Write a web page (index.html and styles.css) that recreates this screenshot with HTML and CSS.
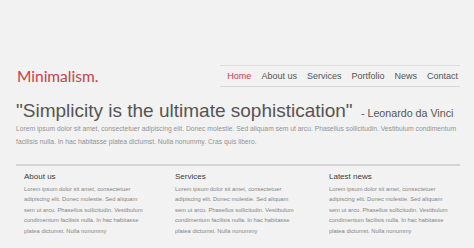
FILE: index.html
```html
<!DOCTYPE html>
<html>
<head>
<meta charset="utf-8">
<link rel="stylesheet" href="styles.css">
</head>
<body>
<div class="page">
  <header class="header">
    <div class="logo">Minimalism.</div>
    <nav class="nav">
      <a class="nav-link active">Home</a>
      <a class="nav-link">About us</a>
      <a class="nav-link">Services</a>
      <a class="nav-link">Portfolio</a>
      <a class="nav-link">News</a>
      <a class="nav-link">Contact</a>
    </nav>
  </header>
  <section class="intro">
    <h1 class="quote">"Simplicity is the ultimate sophistication" <span class="author">- Leonardo da Vinci</span></h1>
    <p class="intro-text">Lorem ipsum dolor sit amet, consectetuer adipiscing elit. Donec molestie. Sed aliquam sem ut arcu. Phasellus sollicitudin. Vestibulum condimentum facilisis nulla. In hac habitasse platea dictumst. Nulla nonummy. Cras quis libero.</p>
  </section>
  <section class="columns">
    <div class="col">
      <h2 class="col-title">About us</h2>
      <p class="col-text">Lorem ipsum dolor sit amet, consectetuer<br>adipiscing elit. Donec molestie. Sed aliquam<br>sem ut arcu. Phasellus sollicitudin. Vestibulum<br>condimentum facilisis nulla. In hac habitasse<br>platea dictumst. Nulla nonummy</p>
    </div>
    <div class="col">
      <h2 class="col-title">Services</h2>
      <p class="col-text">Lorem ipsum dolor sit amet, consectetuer<br>adipiscing elit. Donec molestie. Sed aliquam<br>sem ut arcu. Phasellus sollicitudin. Vestibulum<br>condimentum facilisis nulla. In hac habitasse<br>platea dictumst. Nulla nonummy</p>
    </div>
    <div class="col">
      <h2 class="col-title">Latest news</h2>
      <p class="col-text">Lorem ipsum dolor sit amet, consectetuer<br>adipiscing elit. Donec molestie. Sed aliquam<br>sem ut arcu. Phasellus sollicitudin. Vestibulum<br>condimentum facilisis nulla. In hac habitasse<br>platea dictumst. Nulla nonummy</p>
    </div>
  </section>
</div>
</body>
</html>
```

FILE: styles.css
```css
html, body {
  margin: 0;
  padding: 0;
  background: #f2f2f2;
}
body {
  font-family: "Liberation Sans", Arial, sans-serif;
  width: 474px;
  height: 248px;
  overflow: hidden;
}
.page {
  padding: 65px 14px 0 16px;
}
.header {
  display: flex;
  justify-content: space-between;
  align-items: center;
}
.logo {
  font-family: Lato, "Open Sans", sans-serif;
  font-size: 15.5px;
  color: #c8414b;
  padding-left: 1px;
}
.nav {
  display: flex;
  gap: 10px;
  padding: 0 2px 0 7px;
  border-top: 1px solid #dedede;
  border-bottom: 1px solid #d6d6d6;
}
.nav-link {
  font-size: 9px;
  line-height: 20px;
  color: #555;
}
.nav-link.active {
  color: #c8414b;
}
.intro {
  padding-top: 15px;
  padding-bottom: 16px;
  border-bottom: 2px solid #d4d4d4;
}
.quote {
  margin: 0;
  font-weight: normal;
  font-size: 19px;
  line-height: 18px;
  color: #555;
}
.author {
  font-size: 10.7px;
  padding-left: 3px;
}
.intro-text {
  margin: 0;
  font-size: 6.75px;
  line-height: 13px;
  color: #939393;
}
.columns {
  display: grid;
  grid-template-columns: 151px 154px 1fr;
  padding: 5px 0 0 8px;
}
.col-title {
  margin: 0;
  font-weight: normal;
  font-size: 8px;
  line-height: 12px;
  color: #3a3a3a;
}
.col-text {
  margin: 1px 0 0;
  font-size: 5.8px;
  line-height: 10.4px;
  color: #858585;
}
```
